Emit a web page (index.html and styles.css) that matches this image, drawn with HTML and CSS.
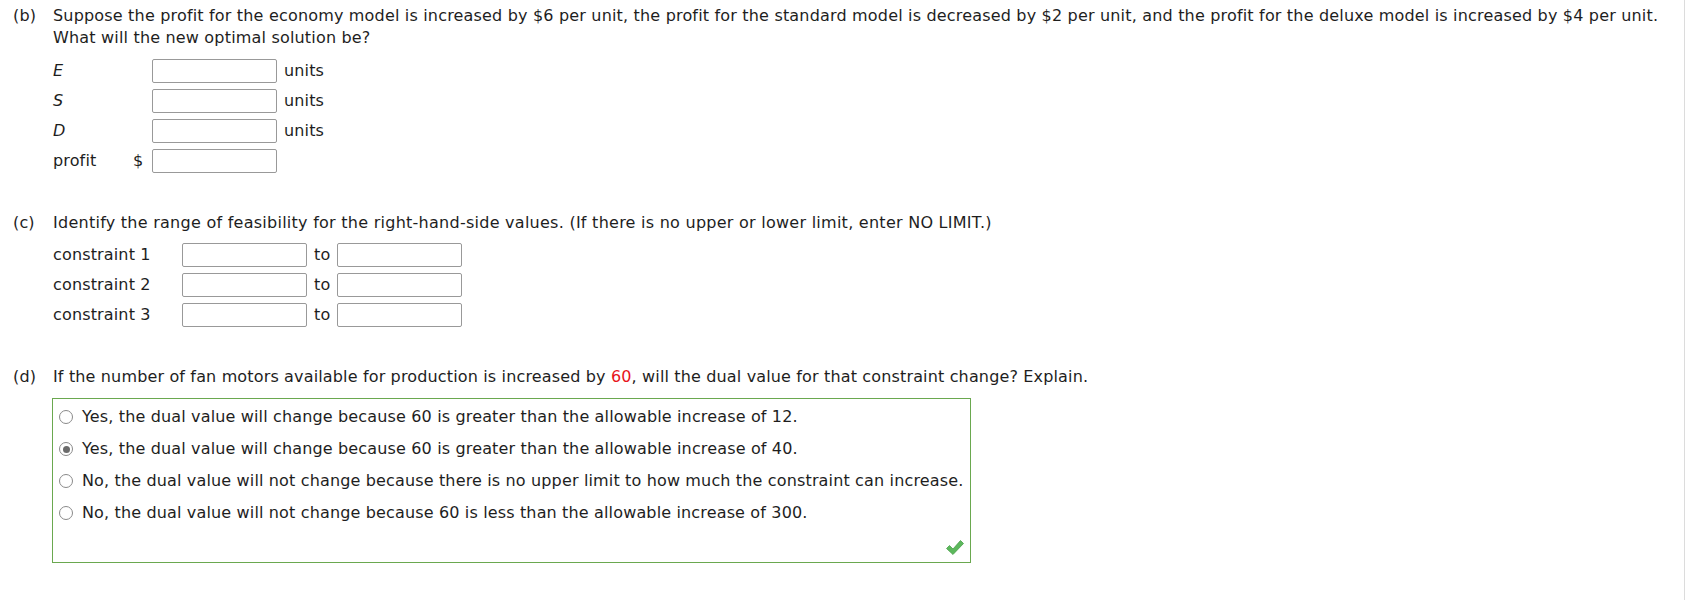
FILE: index.html
```html
<!DOCTYPE html>
<html lang="en">
<head>
<meta charset="utf-8">
<title>Sensitivity analysis</title>
<link rel="stylesheet" href="styles.css">
</head>
<body>
<div class="part part-b">
  <div class="part-label">(b)</div>
  <div class="part-body">
    <p class="question q-b">Suppose the profit for the economy model is increased by $6 per unit, the profit for the standard model is decreased by $2 per unit, and the profit for the deluxe model is increased by $4 per unit. What will the new optimal solution be?</p>
    <div class="grid-b">
      <span class="var">E</span><span></span><span class="field"></span><span class="unit">units</span>
      <span class="var">S</span><span></span><span class="field"></span><span class="unit">units</span>
      <span class="var">D</span><span></span><span class="field"></span><span class="unit">units</span>
      <span>profit</span><span class="dollar">$</span><span class="field"></span><span></span>
    </div>
  </div>
</div>

<div class="part part-c">
  <div class="part-label">(c)</div>
  <div class="part-body">
    <p class="question q-c">Identify the range of feasibility for the right-hand-side values. (If there is no upper or lower limit, enter NO LIMIT.)</p>
    <div class="grid-c">
      <span>constraint 1</span><span class="field"></span><span class="to">to</span><span class="field"></span>
      <span>constraint 2</span><span class="field"></span><span class="to">to</span><span class="field"></span>
      <span>constraint 3</span><span class="field"></span><span class="to">to</span><span class="field"></span>
    </div>
  </div>
</div>

<div class="part part-d">
  <div class="part-label">(d)</div>
  <div class="part-body">
    <p class="question">If the number of fan motors available for production is increased by <span class="red">60</span>, will the dual value for that constraint change? Explain.</p>
  </div>
</div>
<div class="answer-box">
  <div class="option"><span class="radio"></span><span>Yes, the dual value will change because 60 is greater than the allowable increase of 12.</span></div>
  <div class="option"><span class="radio checked"></span><span>Yes, the dual value will change because 60 is greater than the allowable increase of 40.</span></div>
  <div class="option"><span class="radio"></span><span>No, the dual value will not change because there is no upper limit to how much the constraint can increase.</span></div>
  <div class="option"><span class="radio"></span><span>No, the dual value will not change because 60 is less than the allowable increase of 300.</span></div>
  <svg class="check" width="20" height="17" viewBox="0 0 20 17" aria-hidden="true">
    <path d="M1.5 9.5 L4.5 6.5 L8 10 L15.5 1.5 L18.5 4.5 L8 15.5 Z" fill="#5cb85c" stroke="#4a9f4a" stroke-width="0.8" stroke-linejoin="round"/>
  </svg>
</div>
</body>
</html>
```

FILE: styles.css
```css
html {
  height: 100%;
  box-sizing: border-box;
  border-right: 1px solid #dcdcdc;
}
body {
  margin: 0;
  padding: 5px 13px 0 13px;
  font-family: "DejaVu Sans", Verdana, sans-serif;
  font-size: 16px;
  letter-spacing: 0.15px;
  line-height: 22px;
  color: #1e1e1e;
  background: #fff;
}
.part {
  display: flex;
}
.part-label {
  width: 40px;
  flex: none;
}
.part-body {
  flex: 1;
}
.question {
  margin: 0;
}
.q-b {
  letter-spacing: 0.18px;
}
.q-c {
  letter-spacing: 0.26px;
}
.grid-b {
  display: grid;
  grid-template-columns: 80px 19px 125px auto;
  grid-auto-rows: 24px;
  row-gap: 6px;
  align-items: center;
  margin-top: 10px;
}
.var {
  font-style: italic;
}
.unit {
  padding-left: 7px;
}
.field {
  display: block;
  height: 24px;
  box-sizing: border-box;
  border: 1px solid #999;
  border-radius: 2px;
  background: #fff;
}
.part-c {
  margin-top: 39px;
}
.grid-c {
  display: grid;
  grid-template-columns: 129px 125px 30px 125px;
  grid-auto-rows: 24px;
  row-gap: 6px;
  align-items: center;
  margin-top: 9px;
}
.to {
  padding-left: 7px;
}
.part-d {
  margin-top: 39px;
}
.red {
  color: #e8141b;
}
.answer-box {
  position: relative;
  margin: 10px 0 0 39px;
  width: 919px;
  height: 165px;
  box-sizing: border-box;
  border: 1px solid #6aa84f;
  padding: 2px 0 0 6px;
}
.option {
  display: flex;
  align-items: center;
  height: 32px;
  gap: 9px;
}
.radio {
  width: 14px;
  height: 14px;
  box-sizing: border-box;
  border: 1px solid #8a8a8a;
  border-radius: 50%;
  background: #fff;
  flex: none;
  position: relative;
}
.radio.checked::after {
  content: "";
  position: absolute;
  left: 2.5px;
  top: 2.5px;
  width: 7px;
  height: 7px;
  border-radius: 50%;
  background: #6b6b6b;
}
.check {
  position: absolute;
  right: 5px;
  bottom: 6px;
}
```
